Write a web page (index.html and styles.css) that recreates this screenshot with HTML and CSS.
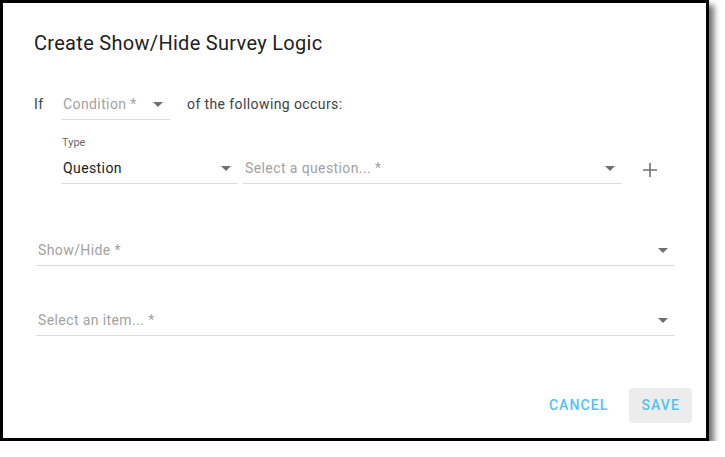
FILE: index.html
```
<!DOCTYPE html>
<html lang="en">
<head>
<meta charset="utf-8">
<title>Create Show/Hide Survey Logic</title>
<link rel="stylesheet" href="styles.css">
</head>
<body>
<div class="dialog">
  <h1 class="title">Create Show/Hide Survey Logic</h1>

  <div class="if-row">
    <span class="if-word">If</span>
    <div class="select select-condition">
      <span class="placeholder">Condition *</span>
      <svg class="arrow" viewBox="0 0 24 20" width="24" height="20"><path d="M7 8l5 5 5-5z"/></svg>
    </div>
    <span class="occurs">of the following occurs:</span>
  </div>

  <div class="cond-block">
    <div class="type-label">Type</div>
    <div class="cond-row">
      <div class="select select-type">
        <span class="value">Question</span>
        <svg class="arrow" viewBox="0 0 24 20" width="24" height="20"><path d="M7 8l5 5 5-5z"/></svg>
      </div>
      <div class="select select-question">
        <span class="placeholder">Select a question... *</span>
        <svg class="arrow" viewBox="0 0 24 20" width="24" height="20"><path d="M7 8l5 5 5-5z"/></svg>
      </div>
      <svg class="plus" viewBox="0 0 24 24" width="24" height="24"><path d="M12 5v14M5 12h14"/></svg>
    </div>
  </div>

  <div class="select select-full select-showhide">
    <span class="placeholder">Show/Hide *</span>
    <svg class="arrow" viewBox="0 0 24 20" width="24" height="20"><path d="M7 8l5 5 5-5z"/></svg>
  </div>

  <div class="select select-full select-item">
    <span class="placeholder">Select an item... *</span>
    <svg class="arrow" viewBox="0 0 24 20" width="24" height="20"><path d="M7 8l5 5 5-5z"/></svg>
  </div>

  <div class="actions">
    <button class="btn btn-cancel">Cancel</button>
    <button class="btn btn-save">Save</button>
  </div>
</div>
</body>
</html>
```
FILE: styles.css
```
* { box-sizing: border-box; }
html, body { margin: 0; padding: 0; background: #ffffff; }
body { font-family: Roboto, "Liberation Sans", sans-serif; }

.dialog {
  width: 709px;
  height: 441px;
  border: 3px solid #000;
  background: #fff;
  box-shadow: 5px 5px 6px rgba(0, 0, 0, 0.55);
  padding: 28px 30px 15px 31px;
  display: flex;
  flex-direction: column;
}

.title {
  margin: 0;
  font-size: 20px;
  line-height: 24px;
  font-weight: 400;
  letter-spacing: 0.3px;
  color: #212121;
}

.if-row {
  margin-top: 39px;
  display: flex;
  align-items: flex-start;
  font-size: 14px;
  line-height: 20px;
  letter-spacing: 0.4px;
  color: #424242;
}
.if-word { width: 27px; }
.occurs { margin-left: 17px; }

.select {
  display: flex;
  align-items: center;
  justify-content: space-between;
  font-size: 14px;
  line-height: 20px;
  letter-spacing: 0.4px;
  padding: 0 0 5px 2px;
  border-bottom: 1px solid #dcdcdc;
}
.placeholder { color: #a2a2a2; }
.value { color: #212121; }
.arrow { display: block; fill: #6f6f6f; flex: none; }

.select-condition { width: 109px; }

.cond-block { margin-top: 16px; margin-left: 27px; }
.type-label {
  font-size: 11px;
  line-height: 13px;
  color: #6a6a6a;
  padding-left: 1px;
}
.cond-row {
  margin-top: 9px;
  display: flex;
  align-items: flex-start;
}
.select-type { width: 177px; }
.select-question { width: 379px; margin-left: 5px; }
.plus {
  display: block;
  margin-left: 16px;
  stroke: #707070;
  stroke-width: 1.6;
  fill: none;
}

.select-full { margin-left: 2px; width: 639px; }
.select-showhide { margin-top: 56px; }
.select-item { margin-top: 44px; }

.actions {
  margin-top: 52px;
  margin-right: -16px;
  display: flex;
  justify-content: flex-end;
  gap: 9px;
}
.btn {
  font-family: Roboto, "Liberation Sans", sans-serif;
  font-size: 14px;
  font-weight: 500;
  line-height: 21px;
  letter-spacing: 1.1px;
  text-transform: uppercase;
  color: #4fc3f7;
  background: transparent;
  border: none;
  border-radius: 4px;
  padding: 7px 12px;
  height: 35px;
}
.btn-save { background: #ececec; }
```
